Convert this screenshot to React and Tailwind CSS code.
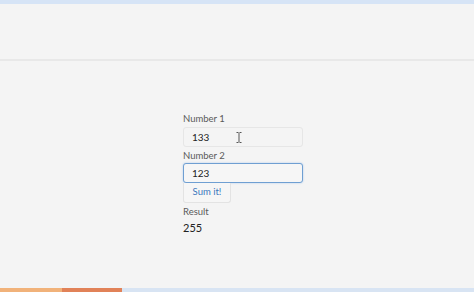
import React, { useState } from 'react';

export default function App() {
  const [a, setA] = useState('133');
  const [b, setB] = useState('123');
  const [result, setResult] = useState('255');

  const sum = () => setResult(String(Number(a) + Number(b)));

  return (
    <div className="flex h-[292px] w-[474px] flex-col overflow-hidden bg-[#f4f4f4] font-['Lato','Open_Sans',sans-serif]">
      <div className="h-[4px] bg-[#d6e4f6]" />
      <div className="h-[57px] border-b-2 border-[#e8e8e8] bg-[#f4f4f4]" />

      <main className="flex flex-1 flex-col items-start pl-[183px] pt-[52px]">
        <label className="block text-[9.5px] leading-[12px] text-[#5a5a5a]">Number 1</label>
        <div className="relative mt-[2px] w-[120px]">
          <input
            value={a}
            onChange={e => setA(e.target.value)}
            className="block h-[20px] w-full rounded-[3px] border border-[#e6e6e6] bg-[#f4f4f4] px-[8px] text-[10px] text-[#222] outline-none"
          />
          <svg className="pointer-events-none absolute left-[53px] top-[5px]" width="6" height="11" viewBox="0 0 6 11">
            <path d="M0.5 0.5h2M3.5 0.5h2M3 1v9M0.5 10.5h2M3.5 10.5h2" stroke="#555" strokeWidth="1" fill="none" />
          </svg>
        </div>

        <label className="mt-[3px] block text-[9.5px] leading-[12px] text-[#5a5a5a]">Number 2</label>
        <input
          value={b}
          onChange={e => setB(e.target.value)}
          className="mt-[1px] block h-[20px] w-[120px] rounded-[3px] border border-[#6f9fd2] bg-[#f6f6f6] px-[8px] text-[10px] text-[#222] shadow-[0_0_2px_#a9c7ea] outline-none"
        />

        <button
          onClick={sum}
          className="h-[20px] w-[48px] rounded-b-[3px] border border-t-0 border-[#e3e3e3] bg-[#f6f6f6] text-[9.5px] text-[#3b78bd]"
        >
          Sum it!
        </button>

        <p className="mt-[3px] text-[9.5px] leading-[12px] text-[#5a5a5a]">Result</p>
        <p className="mt-[3px] text-[11px] leading-[14px] text-[#222]">{result}</p>
      </main>

      <div className="flex h-[4px]">
        <div className="w-[62px] bg-[#f1b27a]" />
        <div className="w-[60px] bg-[#e18258]" />
        <div className="flex-1 bg-[#d8e4f3]" />
      </div>
    </div>
  );
}
